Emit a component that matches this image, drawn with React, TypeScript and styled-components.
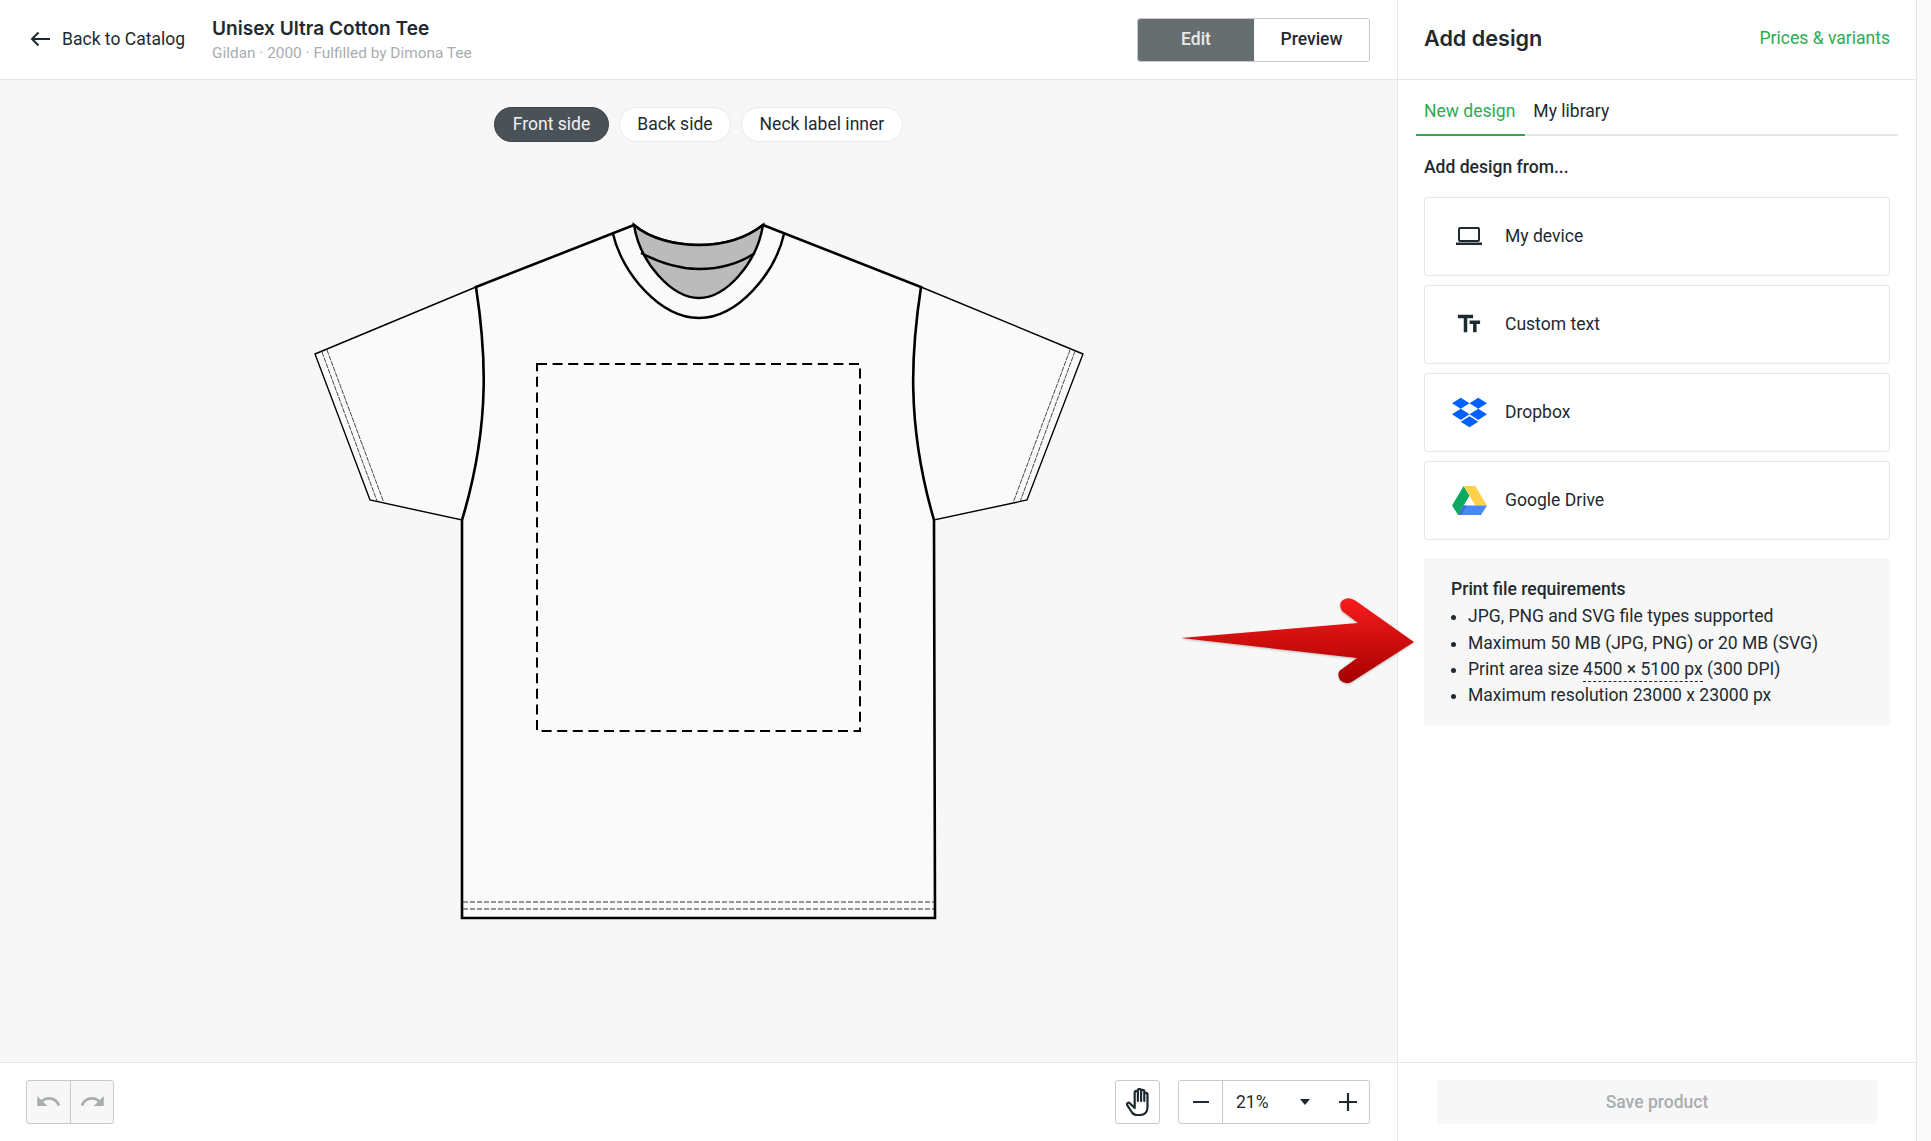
import * as React from "react";
import styled, { createGlobalStyle } from "styled-components";
import { MdRedo, MdTextFields, MdUndo } from "react-icons/md";
import { SiDropbox } from "react-icons/si";

const GlobalStyle = createGlobalStyle`
  html, body {
    margin: 0;
    padding: 0;
    background: #fff;
  }
  * {
    box-sizing: border-box;
  }
`;

const Page = styled.div`
  position: relative;
  width: 1931px;
  height: 1141px;
  overflow: hidden;
  display: grid;
  grid-template-columns: 1397px 519px 15px;
  font-family: Roboto, "Liberation Sans", sans-serif;
  font-size: 17.55px;
  color: #1f2a30;
`;

const Editor = styled.div`
  display: grid;
  grid-template-rows: 80px 1fr 79px;
  min-height: 0;
`;

const Header = styled.header`
  display: flex;
  align-items: center;
  padding: 0 27px 2px 30px;
  border-bottom: 1px solid #e6e6e6;
`;

const BackLink = styled.a`
  display: flex;
  align-items: center;
  gap: 12px;
  width: 182px;
  color: #1f2a30;
`;

const ProductInfo = styled.div`
  display: flex;
  flex-direction: column;
  flex: 1;
  margin-top: 4px;
`;

const ProductTitle = styled.div`
  font-family: Inter, Roboto, sans-serif;
  font-weight: 600;
  font-size: 19.1px;
  line-height: 28px;
  margin-top: -4px;
`;

const ProductMeta = styled.div`
  font-size: 15.4px;
  line-height: 20px;
  color: #a9adae;
  margin-top: 1px;
`;

const ModeSwitch = styled.div`
  display: flex;
  height: 44px;
  margin-top: 3px;
  border: 1px solid #c8cacb;
  border-radius: 3px;
  overflow: hidden;
`;

const ModeButton = styled.div<{ $active?: boolean }>`
  display: flex;
  align-items: center;
  justify-content: center;
  padding-bottom: 2px;
  background: ${(p) => (p.$active ? "#676e70" : "#fff")};
  color: ${(p) => (p.$active ? "#e8eaea" : "#1f2a30")};
  width: ${(p) => (p.$active ? "116px" : "115px")};
  font-weight: 500;
`;

const Canvas = styled.main`
  background: #f7f7f7;
  display: flex;
  flex-direction: column;
  align-items: center;
  padding-top: 27px;
  min-height: 0;
`;

const SideTabs = styled.div`
  display: flex;
  gap: 10px;
`;

const SideTab = styled.div<{ $active?: boolean }>`
  height: 35px;
  padding: 0 17.5px 2px;
  display: flex;
  align-items: center;
  border-radius: 18px;
  border: 1px solid ${(p) => (p.$active ? "#3a4348" : "#e9e9e9")};
  background: ${(p) => (p.$active ? "#4a5257" : "#fff")};
  color: ${(p) => (p.$active ? "#f2f3f3" : "#1f2a30")};
`;

const ShirtDrawing = styled.svg`
  display: block;
  margin: 69px 0 0 3px;
  flex: none;
`;

const Footer = styled.footer`
  display: flex;
  align-items: center;
  padding: 0 27px 1px 26px;
  border-top: 1px solid #e6e6e6;
`;

const ToolGroup = styled.div<{ $muted?: boolean }>`
  display: flex;
  height: 44px;
  border: 1px solid #c8cacb;
  border-radius: 3px;
  overflow: hidden;
  background: ${(p) => (p.$muted ? "#f7f7f7" : "#fff")};
  color: ${(p) => (p.$muted ? "#a9adae" : "#1f2a30")};
`;

const ToolButton = styled.div<{ $width: number; $divided?: boolean }>`
  width: ${(p) => p.$width}px;
  display: flex;
  align-items: center;
  justify-content: center;
  border-left: ${(p) => (p.$divided ? "1px solid #c8cacb" : "none")};
`;

const ZoomValue = styled.div`
  width: 104px;
  display: flex;
  align-items: center;
  justify-content: space-between;
  padding: 0 16px 0 13px;
  border-left: 1px solid #c8cacb;
`;

const Caret = styled.span`
  width: 0;
  height: 0;
  border-left: 5px solid transparent;
  border-right: 5px solid transparent;
  border-top: 6px solid #1f2a30;
`;

const Spacer = styled.div`
  flex: 1;
`;

const HandWrap = styled.div`
  margin-right: 18px;
`;

const Sidebar = styled.aside`
  display: grid;
  grid-template-rows: 80px 1fr 79px;
  border-left: 1px solid #e6e6e6;
  min-height: 0;
`;

const SideHeader = styled.div`
  display: flex;
  align-items: center;
  justify-content: space-between;
  padding: 0 26px 3px 26px;
  border-bottom: 1px solid #e6e6e6;
`;

const SideTitle = styled.div`
  font-family: Inter, Roboto, sans-serif;
  font-weight: 600;
  font-size: 21.6px;
`;

const GreenLink = styled.a`
  color: #2cab52;
`;

const SideBody = styled.div`
  display: flex;
  flex-direction: column;
  min-height: 0;
`;

const TabRow = styled.div`
  display: flex;
  height: 56px;
  margin: 0 18px;
  border-bottom: 2px solid #e6e6e6;
`;

const Tab = styled.div<{ $active?: boolean }>`
  display: flex;
  align-items: center;
  height: 56px;
  padding: 10px 10px 2px 8px;
  color: ${(p) => (p.$active ? "#2cab52" : "#1f2a30")};
  border-bottom: 2px solid ${(p) => (p.$active ? "#2cab52" : "transparent")};
`;

const Section = styled.div`
  display: flex;
  flex-direction: column;
  padding: 19px 26px 0 26px;
`;

const SectionLabel = styled.div`
  font-weight: 500;
  line-height: 24px;
  margin-bottom: 18px;
`;

const SourceList = styled.div`
  display: flex;
  flex-direction: column;
  gap: 9px;
`;

const SourceCard = styled.div`
  display: flex;
  align-items: center;
  height: 79px;
  padding-bottom: 1px;
  border: 1px solid #e6e6e6;
  border-radius: 3px;
  background: #fff;
`;

const SourceIcon = styled.span`
  width: 80px;
  padding-left: 8px;
  display: flex;
  align-items: center;
  justify-content: center;
`;

const Requirements = styled.div`
  margin-top: 18px;
  height: 167px;
  padding: 18px 27px 0;
  background: #f7f7f7;
  border-radius: 3px;
  line-height: 26.3px;
`;

const RequirementsTitle = styled.div`
  font-weight: 500;
`;

const RequirementsList = styled.ul`
  margin: 1px 0 0;
  padding: 0 0 0 17px;
`;

const Measure = styled.span`
  border-bottom: 1px dashed #1f2a30;
  padding-bottom: 2px;
`;

const SaveButton = styled.div`
  flex: 1;
  height: 44px;
  display: flex;
  align-items: center;
  justify-content: center;
  background: #f7f7f7;
  border-radius: 3px;
  color: #a9adae;
  font-weight: 500;
`;

const SideFooter = styled.div`
  display: flex;
  align-items: center;
  padding: 0 39px 1px 39px;
  border-top: 1px solid #e6e6e6;
`;

const ScrollTrack = styled.div`
  background: #fafafa;
  border-left: 1px solid #e6e6e6;
`;

const PointerArrow = styled.svg`
  position: absolute;
  left: 1170px;
  top: 590px;
  pointer-events: none;
  filter: drop-shadow(0 1px 1px rgba(0, 0, 0, 0.25));
`;

const ShirtSvg = () => (
  <ShirtDrawing
    width="800"
    height="720"
    viewBox="300 210 800 720"
    fill="none"
    stroke="#000"
    strokeLinejoin="miter"
  >
    {/* sleeves */}
    <path d="M476 286 L315 353 L370 499 L462 519 C492 420 485 345 476 286Z" fill="#fafafa" strokeWidth="1.4" />
    <path d="M921 286 L1083 353 L1027 499 L934 519 C905 420 912 345 921 286Z" fill="#fafafa" strokeWidth="1.4" />
    {/* body */}
    <path
      d="M476 286 L634 224 C650 238 676 244 699 244 C722 244 745 238 763 224 L921 286 C912 345 905 420 934 519 L935 917 L462 917 L462 519 C492 420 485 345 476 286Z"
      fill="#fafafa"
      strokeWidth="2.6"
    />
    {/* collar */}
    <path d="M613 233 C622 272 660 317 699 317 C738 317 775 272 784 233" strokeWidth="2.4" />
    <path
      d="M634 224 C640 262 672 297 699 297 C726 297 757 262 763 224 C745 238 722 244 699 244 C676 244 650 238 634 224Z"
      fill="#bbbbbb"
      strokeWidth="2.4"
    />
    <path d="M641 252 C660 262 680 268 699 268 C720 268 740 262 755 252" strokeWidth="2.4" />
    {/* print area */}
    <rect x="537" y="363" width="323" height="367" strokeWidth="2" strokeDasharray="10 5.6" />
    {/* stitching */}
    <g stroke="#333" strokeWidth="0.9" strokeDasharray="5 1">
      <path d="M322 351 L377 500" />
      <path d="M327 349 L384 502" />
      <path d="M1075 350 L1020 501" />
      <path d="M1070 349 L1013 502" />
    </g>
    <g stroke="#333" strokeWidth="1" strokeDasharray="5 2">
      <path d="M463 901 L934 901" />
      <path d="M463 908 L934 908" />
    </g>
  </ShirtDrawing>
);

const HandIcon = () => (
  <svg width="24" height="28" viewBox="0 0 24 28" fill="none" stroke="#1f2a30" strokeWidth="2.2" strokeLinecap="round" strokeLinejoin="round">
    <path d="M8.7 20 V4.5 a1.6 1.6 0 0 1 3.2 0 V13 M11.9 13 V2.5 a1.6 1.6 0 0 1 3.2 0 V13 M15.1 13 V3.5 a1.6 1.6 0 0 1 3.2 0 V13 M18.3 13 V6.5 a1.6 1.6 0 0 1 3.2 0 V19 c0 5 -3 8 -7.5 8 h-3 c-2 0 -3.6 -.5 -5 -2.5 L1.2 17.2 c-1 -1.7 1.2 -3.4 2.6 -2 L8.7 20" />
  </svg>
);

const LaptopIcon = () => (
  <svg width="26" height="18" viewBox="0 0 26 18" fill="none">
    <rect x="3" y="1" width="20" height="13" stroke="#1f2a30" strokeWidth="2" rx="1" />
    <rect x="0" y="15.5" width="26" height="2.5" fill="#1f2a30" />
  </svg>
);

const DriveIcon = () => (
  <svg width="35" height="29" viewBox="0 0 35 29">
    <polygon points="11.7,0 17.5,9.8 6,29 0,19.5" fill="#0da960" />
    <polygon points="11.7,0 23.3,0 35,19.5 23.3,19.5" fill="#ffd04b" />
    <polygon points="11.7,19.5 35,19.5 29,29 6,29" fill="#4688f5" />
    <polygon points="11.7,19.5 15,19.5 9,29 6,29" fill="#3a6fd0" />
  </svg>
);

const sources = [
  { label: "My device", icon: <LaptopIcon /> },
  { label: "Custom text", icon: <MdTextFields size={28} color="#1f2a30" /> },
  { label: "Dropbox", icon: <SiDropbox size={35} color="#0061ff" /> },
  { label: "Google Drive", icon: <DriveIcon /> },
];

const App = () => (
  <Page>
    <GlobalStyle />
    <Editor>
      <Header>
        <BackLink>
          <svg width="20" height="16" viewBox="0 0 20 16" fill="none" stroke="#1f2a30" strokeWidth="2">
            <path d="M20 8 H2 M8.5 1.5 L2 8 L8.5 14.5" />
          </svg>
          Back to Catalog
        </BackLink>
        <ProductInfo>
          <ProductTitle>Unisex Ultra Cotton Tee</ProductTitle>
          <ProductMeta>Gildan · 2000 · Fulfilled by Dimona Tee</ProductMeta>
        </ProductInfo>
        <ModeSwitch>
          <ModeButton $active>Edit</ModeButton>
          <ModeButton>Preview</ModeButton>
        </ModeSwitch>
      </Header>
      <Canvas>
        <SideTabs>
          <SideTab $active>Front side</SideTab>
          <SideTab>Back side</SideTab>
          <SideTab>Neck label inner</SideTab>
        </SideTabs>
        <ShirtSvg />
      </Canvas>
      <Footer>
        <ToolGroup $muted>
          <ToolButton $width={43}>
            <MdUndo size={27} />
          </ToolButton>
          <ToolButton $width={43} $divided>
            <MdRedo size={27} />
          </ToolButton>
        </ToolGroup>
        <Spacer />
        <HandWrap>
          <ToolGroup>
            <ToolButton $width={43}>
              <HandIcon />
            </ToolButton>
          </ToolGroup>
        </HandWrap>
        <ToolGroup>
          <ToolButton $width={43}>
            <svg width="16" height="16" viewBox="0 0 16 16" stroke="#1f2a30" strokeWidth="2.2">
              <path d="M0 8 H16" />
            </svg>
          </ToolButton>
          <ZoomValue>
            21%
            <Caret />
          </ZoomValue>
          <ToolButton $width={43}>
            <svg width="18" height="18" viewBox="0 0 18 18" stroke="#1f2a30" strokeWidth="2.2">
              <path d="M0 9 H18 M9 0 V18" />
            </svg>
          </ToolButton>
        </ToolGroup>
      </Footer>
    </Editor>
    <Sidebar>
      <SideHeader>
        <SideTitle>Add design</SideTitle>
        <GreenLink>Prices &amp; variants</GreenLink>
      </SideHeader>
      <SideBody>
        <TabRow>
          <Tab $active>New design</Tab>
          <Tab>My library</Tab>
        </TabRow>
        <Section>
          <SectionLabel>Add design from...</SectionLabel>
          <SourceList>
            {sources.map((s) => (
              <SourceCard key={s.label}>
                <SourceIcon>{s.icon}</SourceIcon>
                {s.label}
              </SourceCard>
            ))}
          </SourceList>
          <Requirements>
            <RequirementsTitle>Print file requirements</RequirementsTitle>
            <RequirementsList>
              <li>JPG, PNG and SVG file types supported</li>
              <li>Maximum 50 MB (JPG, PNG) or 20 MB (SVG)</li>
              <li>
                Print area size <Measure>4500 × 5100 px</Measure> (300 DPI)
              </li>
              <li>Maximum resolution 23000 x 23000 px</li>
            </RequirementsList>
          </Requirements>
        </Section>
      </SideBody>
      <SideFooter>
        <SaveButton>Save product</SaveButton>
      </SideFooter>
    </Sidebar>
    <ScrollTrack />
    <PointerArrow width="250" height="100" viewBox="1170 590 250 100">
      <defs>
        <linearGradient id="arrowFill" x1="0" y1="0" x2="0" y2="1">
          <stop offset="0" stopColor="#f81c1c" />
          <stop offset="1" stopColor="#a60000" />
        </linearGradient>
      </defs>
      <path
        d="M1181 638 L1358 623 L1342 611 Q1338 603 1343 600 Q1349 596 1356 601 L1414 642 L1353 681 Q1346 686 1340 680 Q1336 672 1342 669 L1357 658 Z"
        fill="url(#arrowFill)"
      />
    </PointerArrow>
  </Page>
);

export default App;
